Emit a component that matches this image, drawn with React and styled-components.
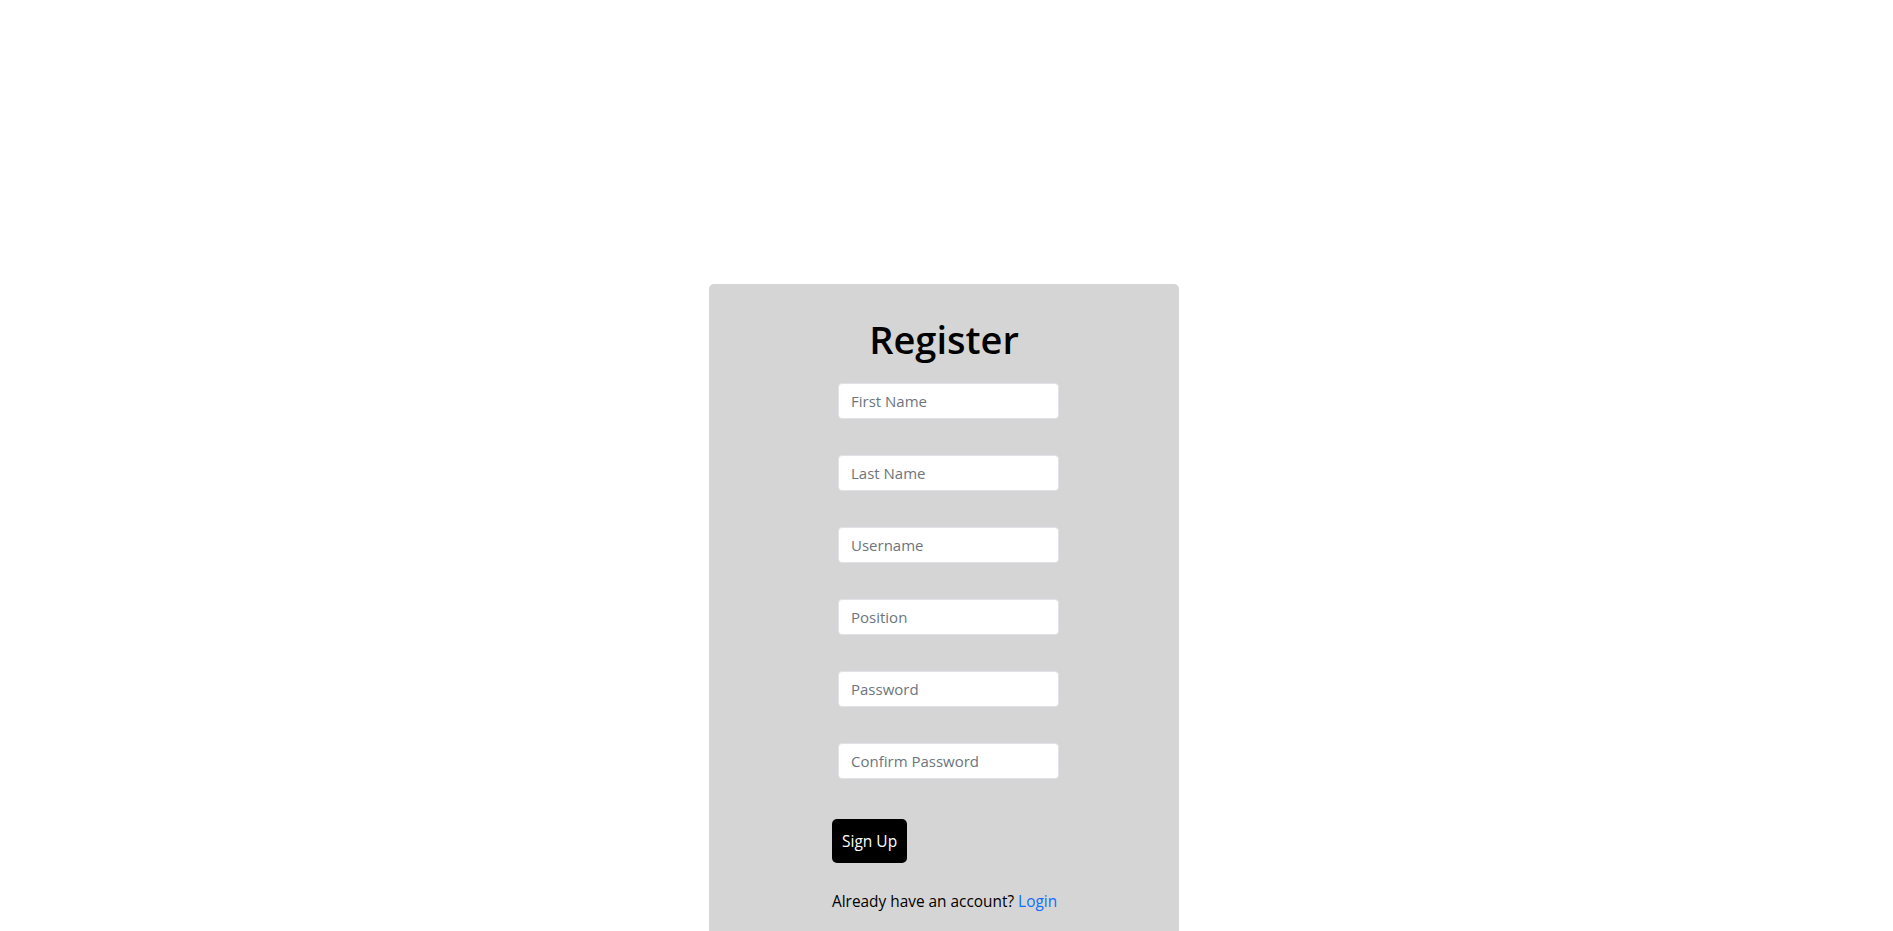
import React, { useState } from 'react'
import styled, { createGlobalStyle } from 'styled-components'

const GlobalStyle = createGlobalStyle`
html, body {
    margin: 0;
    padding: 0;
    overflow: hidden;
    background: #ffffff;
    font-family: "Open Sans", "Noto Sans", "Liberation Sans", sans-serif;
    color: #212529;
}
* {
    box-sizing: border-box;
}
`

const fields = [
    { name: 'firstName', placeholder: 'First Name', type: 'text' },
    { name: 'lastName', placeholder: 'Last Name', type: 'text' },
    { name: 'username', placeholder: 'Username', type: 'text' },
    { name: 'position', placeholder: 'Position', type: 'text' },
    { name: 'password', placeholder: 'Password', type: 'password' },
    { name: 'confirmPassword', placeholder: 'Confirm Password', type: 'password' },
]

function App() {

    const [form, setForm] = useState({})

    const handleChange = (e) => {
        setForm(prev => ({ ...prev, [e.target.name]: e.target.value }))
    }

    return (
        <Page>
            <GlobalStyle />
            <Card>
                <Title>Register</Title>

                <Form onSubmit={(e) => e.preventDefault()}>
                    <Fields>
                        {fields.map(field => {
                            return <Input key={field.name}
                                name={field.name}
                                type={field.type}
                                placeholder={field.placeholder}
                                value={form[field.name] || ''}
                                onChange={handleChange} />
                        })}
                    </Fields>

                    <SubmitBtn type='submit'>Sign Up</SubmitBtn>

                    <Footer>
                        Already have an account? <LoginLink href='#'>Login</LoginLink>
                    </Footer>
                </Form>
            </Card>
        </Page>
    )
}

const Page = styled.main`
display: flex;
justify-content: center;
padding: 284px 5px 0 0;
min-height: 100vh;
`

const Card = styled.section`
width: 470px;
background: #d5d5d5;
border-radius: 5px;
padding: 33px 0 40px 0;
display: flex;
flex-direction: column;
align-items: center;
`

const Title = styled.h1`
margin: 0 0 20px 0;
font-size: 38px;
font-weight: 600;
line-height: 1.2;
color: #000;
`

const Form = styled.form`
align-self: stretch;
display: flex;
flex-direction: column;
align-items: flex-start;
padding-left: 123px;
`

const Fields = styled.div`
display: flex;
flex-direction: column;
gap: 36px;
margin-left: 6px;
`

const Input = styled.input`
width: 221px;
height: 36px;
padding: 0 12px;
font-family: inherit;
font-size: 15px;
color: #212529;
background: #fff;
border: 1px solid #dfe2e6;
border-radius: 4px;
outline: none;

&::placeholder {
    color: #6c757d;
}
`

const SubmitBtn = styled.button`
margin-top: 40px;
height: 44px;
padding: 0 10px;
border: 0;
border-radius: 5px;
background: #000;
color: #fff;
font-family: inherit;
font-size: 15.5px;
cursor: pointer;
`

const Footer = styled.p`
margin: 27px 0 0 0;
font-size: 15.4px;
line-height: 24px;
color: #000;
`

const LoginLink = styled.a`
color: #0d6efd;
text-decoration: none;
`

export default App
